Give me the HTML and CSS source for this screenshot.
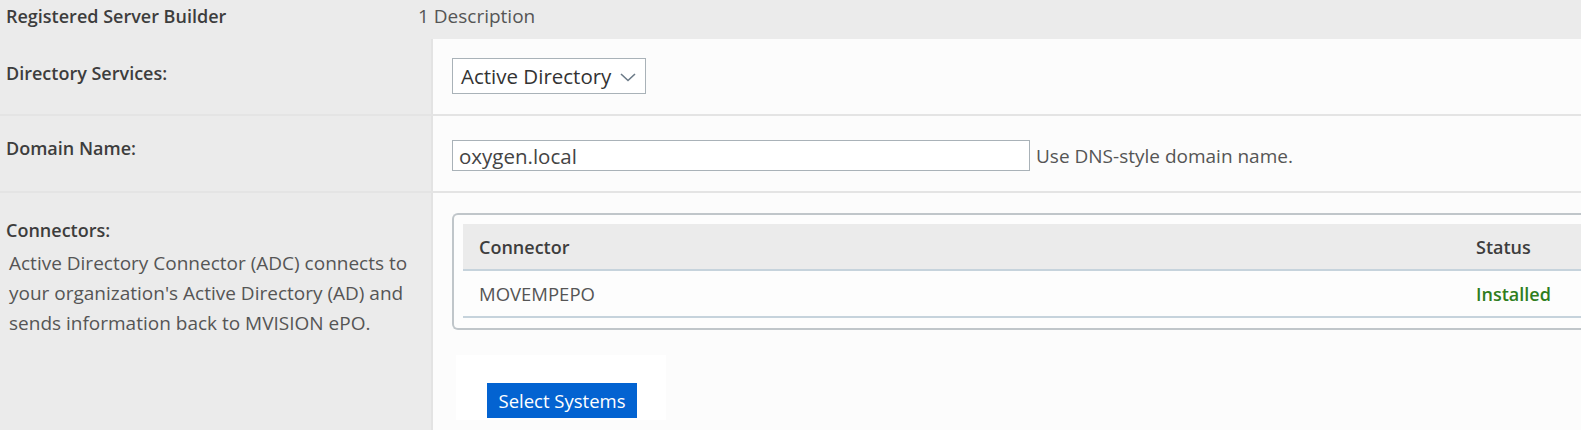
FILE: index.html
```html
<!DOCTYPE html>
<html>
<head>
<meta charset="utf-8">
<link rel="stylesheet" href="styles.css">
</head>
<body>
<div class="page">
  <div class="header">
    <div class="h-title">Registered Server Builder</div>
    <div class="h-desc">1 Description</div>
  </div>
  <div class="row row-dir">
    <div class="label"><div class="lbl">Directory Services:</div></div>
    <div class="value">
      <div class="select">
        <span>Active Directory</span>
        <svg class="chev" width="18" height="10" viewBox="0 0 18 10"><path d="M2 2 L9 8.5 L16 2" fill="none" stroke="#6b7a87" stroke-width="1.6"/></svg>
      </div>
    </div>
  </div>
  <div class="row row-dom">
    <div class="label"><div class="lbl">Domain Name:</div></div>
    <div class="value dom-value">
      <div class="input">oxygen.local</div>
      <span class="hint">Use DNS-style domain name.</span>
    </div>
  </div>
  <div class="row row-con">
    <div class="label">
      <div class="lbl">Connectors:</div>
      <p class="desc">Active Directory Connector (ADC) connects to your organization's Active Directory (AD) and sends information back to MVISION ePO.</p>
    </div>
    <div class="value con-value">
      <div class="table-box">
        <div class="t-head">
          <span class="c1">Connector</span>
          <span class="c2">Status</span>
        </div>
        <div class="t-row">
          <span class="c1">MOVEMPEPO</span>
          <span class="c2 ok">Installed</span>
        </div>
      </div>
      <div class="btn-box">
        <button class="btn">Select Systems</button>
      </div>
    </div>
  </div>
</div>
</body>
</html>
```
FILE: styles.css
```css
html, body {
  margin: 0;
  padding: 0;
  background: #fcfcfc;
  font-family: "Open Sans", "Liberation Sans", sans-serif;
  color: #555;
  overflow: hidden;
}
.page {
  width: 1581px;
  height: 430px;
  display: flex;
  flex-direction: column;
}
.header {
  height: 39px;
  background: #ebebeb;
  display: flex;
  align-items: center;
  padding-bottom: 7px;
  box-sizing: border-box;
}
.h-title {
  width: 412px;
  padding-left: 6px;
  color: #3d3d3d;
  font-weight: 600;
  font-size: 18px;
}
.h-desc {
  color: #555;
  font-size: 19px;
}
.row {
  display: flex;
  border-bottom: 2px solid #e4e4e4;
}
.row-dir { height: 75px; }
.row-dom { height: 75px; }
.row-con { flex: 1; border-bottom: none; }
.label {
  flex: none;
  background: #ebebeb;
  border-right: 2px solid #e3e3e3;
  box-sizing: border-box;
  width: 433px;
}
.lbl {
  font-size: 18px;
  font-weight: 600;
  color: #3d3d3d;
  padding-left: 6px;
}
.row-dir .lbl { padding-top: 22px; }
.row-dom .lbl { padding-top: 20px; }
.row-con .lbl { padding-top: 25px; }
.desc {
  margin: 6px 0 0 9px;
  font-size: 19px;
  line-height: 30px;
  color: #555;
  width: 410px;
}
.value {
  flex: 1;
  padding-left: 19px;
}
.select {
  margin-top: 19px;
  width: 194px;
  height: 36px;
  box-sizing: border-box;
  border: 1px solid #a9b2b8;
  background: #fff;
  display: flex;
  align-items: center;
  padding-left: 8px;
  font-size: 20.5px;
  color: #333;
  gap: 8px;
}
.chev { margin-top: 1px; }
.dom-value {
  display: flex;
  align-items: center;
  padding-top: 4px;
  box-sizing: border-box;
}
.input {
  width: 578px;
  height: 31px;
  box-sizing: border-box;
  border: 1px solid #a9b2b8;
  background: #fff;
  font-size: 20.5px;
  color: #444;
  padding-left: 6px;
  display: flex;
  align-items: center;
}
.hint {
  margin-left: 6px;
  font-size: 19px;
  color: #555;
}
.con-value {
  padding-top: 20px;
}
.table-box {
  border: 2px solid #c0c6ca;
  border-right: none;
  border-radius: 6px 0 0 6px;
  padding: 9px 0 10px 9px;
  background: #fdfdfd;
}
.t-head, .t-row {
  display: flex;
  align-items: center;
  height: 45px;
}
.t-head {
  background: #ebebeb;
  border-bottom: 2px solid #c6d3dc;
  color: #3d3d3d;
  font-weight: 600;
  font-size: 18px;
}
.t-row {
  border-bottom: 2px solid #c6d3dc;
  color: #555;
  font-size: 18.5px;
}
.c1 { padding-left: 16px; width: 997px; }
.ok { color: #2f7d20; font-weight: 600; font-size: 18px; }
.btn-box {
  margin-top: 25px;
  margin-left: 4px;
  width: 210px;
  height: 65px;
  background: #fff;
  box-sizing: border-box;
  padding: 28px 0 0 31px;
}
.btn {
  width: 150px;
  height: 35px;
  border: none;
  background: #0363d1;
  color: #fff;
  font-family: "Open Sans", "Liberation Sans", sans-serif;
  font-size: 18.5px;
  padding: 0;
}
```
